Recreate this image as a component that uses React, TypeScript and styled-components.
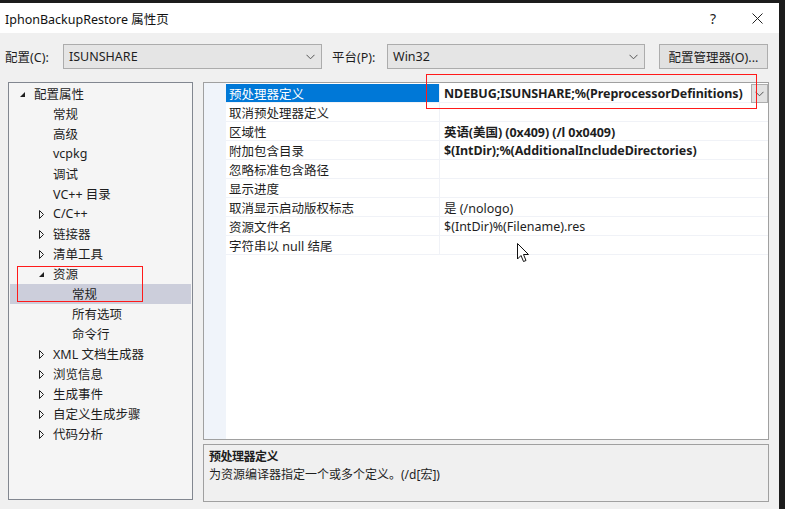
import React from "react"
import styled, { createGlobalStyle } from "styled-components"

const FONT = `"Noto Sans", "Noto Sans CJK SC", sans-serif`

const GlobalStyle = createGlobalStyle`
  html, body {
    margin: 0;
    padding: 0;
    background: #1c1c1c;
  }
  * {
    box-sizing: border-box;
  }
`

const Screen = styled.div`
  position: relative;
  display: flex;
  width: 785px;
  height: 509px;
  overflow: hidden;
  background: #1c1c1c;
  font-family: ${FONT};
  font-size: 12px;
  color: #1e1e1e;
`

const Dialog = styled.div`
  display: flex;
  flex-direction: column;
  width: 779px;
  margin-top: 3px;
  background: #f0f0f0;
`

const TitleBar = styled.div`
  display: flex;
  align-items: center;
  height: 30px;
  padding-left: 5px;
  background: #ffffff;
  font-size: 12.5px;
  color: #111;
`

const Title = styled.span`
  flex: 1;
`

const TitleButton = styled.div`
  display: flex;
  align-items: center;
  justify-content: center;
  width: 44px;
  height: 30px;
  font-size: 14px;
  color: #222;
`

const Body = styled.div`
  flex: 1;
  display: flex;
  flex-direction: column;
  padding: 11px 10px 7px 5px;
`

const Toolbar = styled.div`
  display: flex;
  align-items: center;
  height: 25px;
`

const FieldLabel = styled.span<{ $width: number }>`
  width: ${({ $width }) => $width}px;
  font-size: 12.5px;
  white-space: nowrap;
`

const Combo = styled.div<{ $width: number }>`
  display: flex;
  align-items: center;
  justify-content: space-between;
  width: ${({ $width }) => $width}px;
  height: 25px;
  margin-right: 10px;
  padding: 0 6px 0 5px;
  background: #e5e5e5;
  border: 1px solid #acacac;
  font-size: 12.5px;
`

const Button = styled.div`
  display: flex;
  align-items: center;
  justify-content: center;
  width: 109px;
  height: 25px;
  margin-left: 4px;
  background: #e1e1e1;
  border: 1px solid #adadad;
  font-size: 12.5px;
`

const Main = styled.div`
  flex: 1;
  display: flex;
  gap: 10px;
  margin-top: 13px;
  padding-left: 3px;
`

const Tree = styled.div`
  width: 185px;
  height: 418px;
  padding: 1px 1px 0 1px;
  background: #f5f5f5;
  border: 1px solid #828790;
`

const TreeRow = styled.div<{ $level: number; $selected?: boolean }>`
  display: flex;
  align-items: center;
  height: 20px;
  padding-left: ${({ $level }) => $level * 19}px;
  background: ${({ $selected }) => ($selected ? "#cccedb" : "transparent")};
  font-size: 12.5px;
`

const TreeLabel = styled.span`
  margin-bottom: 2px;
`

const Twisty = styled.span`
  display: flex;
  align-items: center;
  width: 24px;
  height: 20px;
  padding-left: 9px;
`

const RightColumn = styled.div`
  display: flex;
  flex-direction: column;
  gap: 4px;
  width: 566px;
`

const Grid = styled.div`
  position: relative;
  display: flex;
  height: 358px;
  background: #ffffff;
  border: 1px solid #a0a0a0;
`

const Gutter = styled.div`
  width: 22px;
  background: #f0f4fa;
`

const Rows = styled.div`
  flex: 1;
  padding-top: 1px;
`

const PropRow = styled.div`
  display: flex;
  height: 19px;
  border-bottom: 1px solid #f0f2f7;
`

const PropName = styled.div<{ $selected?: boolean }>`
  display: flex;
  align-items: center;
  width: 214px;
  padding-left: 3px;
  border-right: 1px solid #f0f2f7;
  background: ${({ $selected }) => ($selected ? "#0078d7" : "transparent")};
  color: ${({ $selected }) => ($selected ? "#ffffff" : "#1e1e1e")};
  font-size: 12.5px;
`

const PropValue = styled.div<{ $bold?: boolean }>`
  flex: 1;
  display: flex;
  align-items: center;
  padding-left: 4px;
  font-size: 12.5px;
  font-weight: ${({ $bold }) => ($bold ? 700 : 400)};
  white-space: nowrap;
  letter-spacing: ${({ $bold }) => ($bold ? "-0.07px" : "0")};
`

const DropButton = styled.div`
  display: flex;
  align-items: center;
  justify-content: center;
  width: 17px;
  height: 19px;
  background: #e1e1e1;
  border: 1px solid #adadad;
`

const Description = styled.div`
  height: 58px;
  padding: 3px 5px;
  background: #f0f0f0;
  border: 1px solid #a0a0a0;
  line-height: 18px;
`

const DescTitle = styled.div`
  font-weight: 700;
  letter-spacing: -0.5px;
`

const DarkStrip = styled.div`
  flex: 1;
  background: #1c1c1c;
`

const Highlight = styled.div<{ $x: number; $y: number; $w: number; $h: number }>`
  position: absolute;
  left: ${({ $x }) => $x}px;
  top: ${({ $y }) => $y}px;
  width: ${({ $w }) => $w}px;
  height: ${({ $h }) => $h}px;
  border: 1px solid #ff1a1a;
  pointer-events: none;
`

const Cursor = styled.svg`
  position: absolute;
  left: 313px;
  top: 160px;
`

const Chevron = () => (
  <svg width="9" height="6" viewBox="0 0 9 6">
    <path d="M0.5 0.8 L4.5 4.8 L8.5 0.8" fill="none" stroke="#555" strokeWidth="1" />
  </svg>
)

const Expanded = () => (
  <svg width="7" height="7" viewBox="0 0 7 7">
    <path d="M6 1 L6 6 L1 6 Z" fill="#1e1e1e" />
  </svg>
)

const Collapsed = () => (
  <svg width="7" height="9" viewBox="0 0 7 9">
    <path d="M1.5 0.5 L5.5 4.5 L1.5 8.5 Z" fill="none" stroke="#1e1e1e" strokeWidth="1" />
  </svg>
)

type TreeItem = { label: string; level: number; state?: "open" | "closed"; selected?: boolean }

const treeItems: TreeItem[] = [
  { label: "配置属性", level: 0, state: "open" },
  { label: "常规", level: 1 },
  { label: "高级", level: 1 },
  { label: "vcpkg", level: 1 },
  { label: "调试", level: 1 },
  { label: "VC++ 目录", level: 1 },
  { label: "C/C++", level: 1, state: "closed" },
  { label: "链接器", level: 1, state: "closed" },
  { label: "清单工具", level: 1, state: "closed" },
  { label: "资源", level: 1, state: "open" },
  { label: "常规", level: 2, selected: true },
  { label: "所有选项", level: 2 },
  { label: "命令行", level: 2 },
  { label: "XML 文档生成器", level: 1, state: "closed" },
  { label: "浏览信息", level: 1, state: "closed" },
  { label: "生成事件", level: 1, state: "closed" },
  { label: "自定义生成步骤", level: 1, state: "closed" },
  { label: "代码分析", level: 1, state: "closed" },
]

type Prop = { name: string; value?: string; bold?: boolean; selected?: boolean }

const props: Prop[] = [
  { name: "预处理器定义", value: "NDEBUG;ISUNSHARE;%(PreprocessorDefinitions)", bold: true, selected: true },
  { name: "取消预处理器定义" },
  { name: "区域性", value: "英语(美国) (0x409) (/l 0x0409)", bold: true },
  { name: "附加包含目录", value: "$(IntDir);%(AdditionalIncludeDirectories)", bold: true },
  { name: "忽略标准包含路径" },
  { name: "显示进度" },
  { name: "取消显示启动版权标志", value: "是 (/nologo)" },
  { name: "资源文件名", value: "$(IntDir)%(Filename).res" },
  { name: "字符串以 null 结尾" },
]

export default function App() {
  return (
    <Screen>
      <GlobalStyle />
      <Dialog>
        <TitleBar>
          <Title>IphonBackupRestore 属性页</Title>
          <TitleButton>?</TitleButton>
          <TitleButton>
            <svg width="11" height="11" viewBox="0 0 11 11">
              <path d="M0.5 0.5 L10.5 10.5 M10.5 0.5 L0.5 10.5" stroke="#222" strokeWidth="1" />
            </svg>
          </TitleButton>
        </TitleBar>
        <Body>
          <Toolbar>
            <FieldLabel $width={58}>配置(C):</FieldLabel>
            <Combo $width={259}>
              <span>ISUNSHARE</span>
              <Chevron />
            </Combo>
            <FieldLabel $width={55}>平台(P):</FieldLabel>
            <Combo $width={258}>
              <span>Win32</span>
              <Chevron />
            </Combo>
            <Button>配置管理器(O)...</Button>
          </Toolbar>
          <Main>
            <Tree>
              {treeItems.map((item, i) => (
                <TreeRow key={i} $level={item.level} $selected={item.selected}>
                  <Twisty>
                    {item.state === "open" && <Expanded />}
                    {item.state === "closed" && <Collapsed />}
                  </Twisty>
                  <TreeLabel>{item.label}</TreeLabel>
                </TreeRow>
              ))}
            </Tree>
            <RightColumn>
              <Grid>
                <Gutter />
                <Rows>
                  {props.map((p, i) => (
                    <PropRow key={i}>
                      <PropName $selected={p.selected}>{p.name}</PropName>
                      <PropValue $bold={p.bold}>{p.value}</PropValue>
                      {p.selected && (
                        <DropButton>
                          <Chevron />
                        </DropButton>
                      )}
                    </PropRow>
                  ))}
                </Rows>
                <Cursor width="13" height="20" viewBox="0 0 13 20">
                  <path
                    d="M0.5 0.5 L0.5 16 L4 12.5 L6.5 18.5 L9 17.5 L6.5 11.5 L11.5 11.5 Z"
                    fill="#ffffff"
                    stroke="#111"
                    strokeWidth="1"
                    strokeLinejoin="round"
                  />
                </Cursor>
              </Grid>
              <Description>
                <DescTitle>预处理器定义</DescTitle>
                <div>为资源编译器指定一个或多个定义。(/d[宏])</div>
              </Description>
            </RightColumn>
          </Main>
        </Body>
      </Dialog>
      <DarkStrip />
      <Highlight $x={426} $y={74} $w={331} $h={35} />
      <Highlight $x={17} $y={266} $w={126} $h={36} />
    </Screen>
  )
}
